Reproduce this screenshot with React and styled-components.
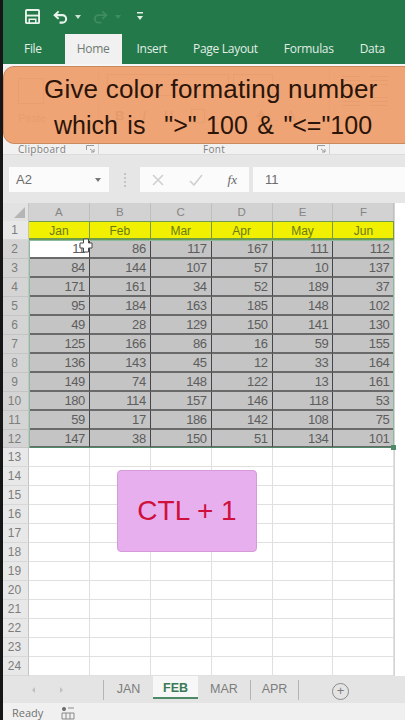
import React from 'react';
import styled, { createGlobalStyle } from 'styled-components';

const Global = createGlobalStyle`
	html, body { margin: 0; padding: 0; background: #161616; }
	body { font-family: "Liberation Sans", Arial, sans-serif; }
`;

const Page = styled.div`
	position: relative;
	width: 405px;
	height: 720px;
	overflow: hidden;
	display: flex;
	background: #161616;
`;

const Edge = styled.div`
	width: 3px;
	flex: none;
	background: #161616;
`;

const Main = styled.div`
	width: 402px;
	display: flex;
	flex-direction: column;
	background: #e6e6e6;
`;

const TitleBar = styled.div`
	height: 33px;
	background: #23794a;
	display: flex;
	align-items: center;
	box-sizing: border-box;
`;

const QuickSlot = styled.div`
	display: flex;
	margin-left: ${p => p.$left}px;
`;

const TabBar = styled.div`
	height: 31px;
	background: #23794a;
	display: flex;
	align-items: flex-end;
	padding-left: 21px;
`;

const RibbonTab = styled.div`
	height: 30px;
	line-height: 29px;
	font-size: 12px;
	margin-right: ${p => p.$gap}px;
	padding: ${p => (p.$active ? '0 12px' : '0')};
	color: ${p => (p.$active ? '#6f7a72' : '#e2eee6')};
	background: ${p => (p.$active ? '#f1f1f1' : 'transparent')};
	font-family: "Open Sans", sans-serif;
	letter-spacing: -0.3px;
`;

const Ribbon = styled.div`
	height: 91px;
	background: #f1f1f1;
	border-top: 2px solid #f6f6f6;
	box-sizing: border-box;
	display: flex;
	border-bottom: 1px solid #dcdcdc;
`;

const RibbonGroup = styled.div`
	width: ${p => p.$width}px;
	flex: none;
	box-sizing: border-box;
	border-right: 1px solid ${p => (p.$plain ? 'transparent' : '#cfcfcf')};
	display: flex;
	flex-direction: column;
	position: relative;
`;

const GroupBody = styled.div`
	height: 76px;
	flex: none;
	box-sizing: border-box;
	padding: ${p => p.$pad};
	display: flex;
	flex-direction: column;
	gap: 12px;
`;

const ToolRow = styled.div`
	display: flex;
	align-items: center;
	gap: ${p => p.$gap || 8}px;
	padding-left: ${p => p.$indent || 0}px;
`;

const ToolSpacer = styled.div`
	width: ${p => p.$width}px;
	flex: none;
`;

const FaintBox = styled.div`
	width: ${p => p.$width}px;
	height: ${p => p.$height || 22}px;
	border: 1px solid #b9b9b9;
	flex: none;
	box-sizing: border-box;
`;

const FaintLetter = styled.span`
	font-size: 13px;
	color: #8b8b8b;
	font-weight: ${p => (p.$bold ? 'bold' : 'normal')};
	font-style: ${p => (p.$italic ? 'italic' : 'normal')};
	text-decoration: ${p => (p.$under ? 'underline' : 'none')};
`;

const PasteLabel = styled.div`
	font-size: 11px;
	color: #a8a8a8;
	margin-top: -4px;
`;

const FaintLines = styled.div`
	width: 18px;
	display: flex;
	flex-direction: column;
	gap: 3px;
	span {
		height: 1px;
		background: #a8a8a8;
	}
`;

const LabelRow = styled.div`
	display: flex;
	align-items: center;
	justify-content: ${p => p.$align || 'center'};
	height: 13px;
	padding: ${p => p.$pad || '0'};
	position: relative;
`;

const GroupLabel = styled.div`
	font-size: 10px;
	color: #808080;
	letter-spacing: 0.3px;
	font-family: "Open Sans", sans-serif;
`;

const Launcher = styled.svg`
	position: absolute;
	right: 3px;
	top: 3px;
`;

const FormulaRow = styled.div`
	height: 48px;
	flex: none;
	box-sizing: border-box;
	padding: 12px 0 0 6px;
	display: flex;
	align-items: flex-start;
	background: #e6e6e6;
`;

const NameBox = styled.div`
	width: 100px;
	height: 25px;
	background: #fbfbfb;
	color: #6c6c6c;
	font-size: 13px;
	line-height: 25px;
	padding: 0 7px;
	box-sizing: border-box;
	display: flex;
	justify-content: space-between;
	align-items: center;
`;

const Caret = styled.span`
	width: 0;
	height: 0;
	border-left: 3px solid transparent;
	border-right: 3px solid transparent;
	border-top: 4px solid #777777;
	margin-right: 1px;
`;

const Dots = styled.div`
	width: 31px;
	height: 25px;
	display: flex;
	flex-direction: column;
	justify-content: center;
	align-items: center;
	gap: 2px;
	span {
		width: 2px;
		height: 2px;
		background: #c4c4c4;
	}
`;

const FxBox = styled.div`
	width: 109px;
	height: 25px;
	background: #fbfbfb;
	display: flex;
	align-items: center;
	justify-content: space-between;
	padding: 0 12px;
	box-sizing: border-box;
	margin-right: 4px;
`;

const Fx = styled.span`
	font-family: "Liberation Serif", serif;
	font-style: italic;
	font-size: 13px;
	color: #666666;
`;

const FormulaInput = styled.div`
	flex: 1;
	height: 25px;
	background: #fbfbfb;
	color: #6c6c6c;
	font-size: 13px;
	line-height: 25px;
	padding-left: 12px;
`;

const SheetWrap = styled.div`
	position: relative;
	height: 472px;
	flex: none;
	background: #ffffff;
`;

const Sheet = styled.div`
	display: grid;
	grid-template-columns: 26px repeat(6, 60.9px) 1fr;
	grid-template-rows: 18px 19px repeat(23, 18.96px);
	height: 472px;
`;

const ColHead = styled.div`
	background: #d2d2d2;
	color: #858585;
	font-size: 11.5px;
	text-align: center;
	line-height: 18px;
	border-right: 1px solid #bfbfbf;
	box-sizing: border-box;
`;

const Corner = styled.div`
	background: #e2e2e2;
	border-right: 1px solid #c4c4c4;
	box-sizing: border-box;
	display: flex;
	align-items: flex-end;
	justify-content: flex-end;
	padding: 0 3px 3px 0;
`;

const RowHead = styled.div`
	background: ${p => (p.$on ? '#d4d4d4' : '#e8e8e8')};
	color: #7d7d7d;
	font-size: 12px;
	text-align: center;
	display: flex;
	align-items: center;
	justify-content: center;
	padding-right: 2px;
	box-sizing: border-box;
	border-bottom: 1px solid ${p => (p.$on ? '#c4c4c4' : '#d8d8d8')};
	border-right: 1px solid #c4c4c4;
`;

const HeadCell = styled.div`
	background: #f0f000;
	color: #6c7a14;
	font-size: 12px;
	text-align: center;
	line-height: 18px;
	box-sizing: border-box;
	border-right: 1px solid #7c9a3c;
	border-bottom: 2px solid #6f9c4c;
	border-top: 1px solid #6f9c4c;
`;

const NumCell = styled.div`
	background: ${p => (p.$white ? '#ffffff' : '#c4c4c4')};
	color: #5d5d5d;
	font-size: 13px;
	letter-spacing: -0.4px;
	text-align: right;
	line-height: 18px;
	padding-right: 4px;
	box-sizing: border-box;
	border-right: 1px solid #45454d;
	border-bottom: 2px solid #6a6a6a;
	overflow: hidden;
`;

const BlankCell = styled.div`
	background: #ffffff;
	box-sizing: border-box;
	border-right: 1px solid #e0e0e0;
	border-bottom: 1px solid #e0e0e0;
`;

const SideCell = styled.div`
	background: #ffffff;
	box-sizing: border-box;
	border-left: 1px solid #d4d4d4;
`;

const Selection = styled.div`
	position: absolute;
	left: 26px;
	top: 37px;
	width: 365px;
	height: 208px;
	border: 1.5px solid #8dbba0;
	border-bottom-color: #4f8a68;
	box-sizing: border-box;
	pointer-events: none;
`;

const Handle = styled.div`
	position: absolute;
	right: -3px;
	bottom: -3px;
	width: 5px;
	height: 5px;
	background: #4f8a68;
`;

const Cursor = styled.svg`
	position: absolute;
	left: 76px;
	top: 35px;
`;

const SheetTabs = styled.div`
	height: 28px;
	flex: none;
	background: #e4e4e4;
	border-top: 1px solid #cfcfcf;
	box-sizing: border-box;
	display: flex;
	align-items: flex-start;
	padding-left: 29px;
`;

const Arrow = styled.div`
	width: 0;
	height: 0;
	margin-top: 11px;
	margin-right: ${p => p.$gap}px;
	border-top: 3px solid transparent;
	border-bottom: 3px solid transparent;
	${p => (p.$left ? 'border-right: 3px solid #c0c0c0;' : 'border-left: 3px solid #c0c0c0;')}
`;

const TabSep = styled.div`
	width: 1px;
	height: 20px;
	margin-top: 4px;
	background: #b4b4b4;
`;

const SheetTab = styled.div`
	width: ${p => p.$width}px;
	height: 24px;
	margin-top: ${p => (p.$active ? '-1px' : '0')};
	box-sizing: border-box;
	font-size: 12.5px;
	line-height: 26px;
	text-align: center;
	color: ${p => (p.$active ? '#397a55' : '#7d7d7d')};
	font-weight: ${p => (p.$active ? 'bold' : 'normal')};
	background: ${p => (p.$active ? '#f7f7f7' : 'transparent')};
	border-bottom: ${p => (p.$active ? '2px solid #4f8a68' : 'none')};
`;

const AddSheet = styled.div`
	width: 15px;
	height: 15px;
	margin: 7px 0 0 33px;
	border: 1px solid #8a8a8a;
	border-radius: 50%;
	color: #7a7a7a;
	font-size: 13px;
	line-height: 14px;
	text-align: center;
`;

const StatusBar = styled.div`
	flex: 1;
	background: #f0f0f0;
	display: flex;
	align-items: flex-end;
	padding: 0 0 0 9px;
	gap: 18px;
	color: #707070;
	font-size: 11px;
	font-family: "Open Sans", sans-serif;
`;

const Banner = styled.div`
	position: absolute;
	left: 3px;
	top: 66px;
	width: 420px;
	height: 78px;
	background: rgba(238, 155, 104, 0.9);
	border: 1px solid #c98a60;
	border-radius: 11px;
	box-sizing: border-box;
	color: #2b1408;
	line-height: 36px;
	padding-top: 4px;
`;

const BannerLine = styled.div`
	white-space: pre;
	font-size: ${p => p.$size}px;
	letter-spacing: ${p => p.$track || 0}px;
	word-spacing: ${p => p.$spread || 0}px;
	padding-left: ${p => p.$pad}px;
`;

const Note = styled.div`
	position: absolute;
	left: 117px;
	top: 470px;
	width: 140px;
	height: 82px;
	background: #e8afee;
	border: 1px solid #d79ad8;
	border-radius: 4px;
	box-sizing: border-box;
	color: #cf0f3c;
	font-size: 28px;
	display: flex;
	align-items: center;
	justify-content: center;
`;

const cols = ['A', 'B', 'C', 'D', 'E', 'F'];
const months = ['Jan', 'Feb', 'Mar', 'Apr', 'May', 'Jun'];
const rows = [
	['11', 86, 117, 167, 111, 112],
	[84, 144, 107, 57, 10, 137],
	[171, 161, 34, 52, 189, 37],
	[95, 184, 163, 185, 148, 102],
	[49, 28, 129, 150, 141, 130],
	[125, 166, 86, 16, 59, 155],
	[136, 143, 45, 12, 33, 164],
	[149, 74, 148, 122, 13, 161],
	[180, 114, 157, 146, 118, 53],
	[59, 17, 186, 142, 108, 75],
	[147, 38, 150, 51, 134, 101],
];
const blankRows = Array.from({ length: 12 }, (_, i) => i + 13);

const SaveIcon = () => (
	<svg width="15" height="15" viewBox="0 0 16 16" fill="none" stroke="#e9f3ec" strokeWidth="2">
		<rect x="1" y="1" width="14" height="14" rx="1" />
		<path d="M1 7h14" />
		<path d="M4.5 15v-4h7v4" strokeWidth="1.6" />
	</svg>
);

const UndoIcon = ({ color }) => (
	<svg width="15" height="14" viewBox="0 0 16 14" fill="none" stroke={color} strokeWidth="2.2">
		<path d="M6 1L1.8 5 6 9" />
		<path d="M2.5 5H10a3.6 3.6 0 0 1 0 8H7" />
	</svg>
);

const RedoIcon = ({ color }) => (
	<svg width="15" height="14" viewBox="0 0 16 14" fill="none" stroke={color} strokeWidth="2">
		<path d="M10 1l4.2 4L10 9" />
		<path d="M13.5 5H6a3.6 3.6 0 0 0 0 8h3" />
	</svg>
);

const TinyCaret = ({ color }) => (
	<svg width="6" height="4" viewBox="0 0 6 4">
		<path d="M0 0h6L3 4z" fill={color} />
	</svg>
);

const MoreIcon = () => (
	<svg width="6" height="9" viewBox="0 0 6 9" fill="#e2eee6">
		<rect x="0" y="0" width="6" height="1.5" />
		<path d="M0 4h6L3 8z" />
	</svg>
);

const LauncherIcon = () => (
	<Launcher width="9" height="8" viewBox="0 0 9 8" fill="none" stroke="#9a9a9a">
		<path d="M0.5 5V0.5H8M4 4l4 3M8 4v3H5" />
	</Launcher>
);

export default function App() {
	return (
		<Page>
			<Global />
			<Edge />
			<Main>
				<TitleBar>
					<QuickSlot $left={22}><SaveIcon /></QuickSlot>
					<QuickSlot $left={13}><UndoIcon color="#e9f3ec" /></QuickSlot>
					<QuickSlot $left={7}><TinyCaret color="#cfe2d6" /></QuickSlot>
					<QuickSlot $left={12}><RedoIcon color="#3f8c62" /></QuickSlot>
					<QuickSlot $left={7}><TinyCaret color="#3f8c62" /></QuickSlot>
					<QuickSlot $left={16}><MoreIcon /></QuickSlot>
				</TitleBar>
				<TabBar>
					<RibbonTab $gap={23}>File</RibbonTab>
					<RibbonTab $gap={15} $active>Home</RibbonTab>
					<RibbonTab $gap={26}>Insert</RibbonTab>
					<RibbonTab $gap={26}>Page Layout</RibbonTab>
					<RibbonTab $gap={26}>Formulas</RibbonTab>
					<RibbonTab $gap={0}>Data</RibbonTab>
				</TabBar>
				<Ribbon>
					<RibbonGroup $width={96}>
						<GroupBody $pad="12px 0 0 15px">
							<FaintBox $width={26} $height={26} />
							<PasteLabel>Paste</PasteLabel>
						</GroupBody>
						<LabelRow $align="flex-start" $pad="0 0 0 15px">
							<GroupLabel>Clipboard</GroupLabel>
							<LauncherIcon />
						</LabelRow>
					</RibbonGroup>
					<RibbonGroup $width={231}>
						<GroupBody $pad="8px 0 0 8px">
							<ToolRow $gap={4}>
								<FaintBox $width={122} />
								<FaintBox $width={40} />
							</ToolRow>
							<ToolRow $gap={18} $indent={8}>
								<FaintLetter $bold>B</FaintLetter>
								<FaintLetter $italic>I</FaintLetter>
								<FaintLetter $under>U</FaintLetter>
								<FaintBox $width={14} $height={14} />
								<ToolSpacer $width={13} />
								<svg width="14" height="14" viewBox="0 0 14 14">
									<path d="M7 1l5 7H2z" fill="#a8a8a8" />
									<circle cx="7" cy="11" r="2.5" fill="#e8b830" />
								</svg>
								<FaintLetter>A</FaintLetter>
							</ToolRow>
						</GroupBody>
						<LabelRow>
							<GroupLabel>Font</GroupLabel>
							<LauncherIcon />
						</LabelRow>
					</RibbonGroup>
					<RibbonGroup $width={75} $plain>
						<GroupBody $pad="10px 0 0 12px">
							<ToolRow $gap={10}>
								<FaintLines><span /><span /><span /></FaintLines>
								<FaintLines><span /><span /><span /></FaintLines>
							</ToolRow>
							<ToolRow $gap={10}>
								<FaintLines><span /><span /><span /></FaintLines>
								<FaintLines><span /><span /><span /></FaintLines>
							</ToolRow>
						</GroupBody>
					</RibbonGroup>
				</Ribbon>
				<FormulaRow>
					<NameBox>A2<Caret /></NameBox>
					<Dots><span /><span /><span /><span /></Dots>
					<FxBox>
						<svg width="12" height="12" viewBox="0 0 12 12" stroke="#cfcfcf" strokeWidth="1.6" fill="none">
							<path d="M1 1l10 10M11 1L1 11" />
						</svg>
						<svg width="14" height="12" viewBox="0 0 14 12" stroke="#cfcfcf" strokeWidth="1.6" fill="none">
							<path d="M1 7l4 4 8-10" />
						</svg>
						<Fx>fx</Fx>
					</FxBox>
					<FormulaInput>11</FormulaInput>
				</FormulaRow>
				<SheetWrap>
					<Sheet>
						<Corner>
							<svg width="11" height="11" viewBox="0 0 11 11"><path d="M11 0v11H0z" fill="#b5b5b5" /></svg>
						</Corner>
						{cols.map(c => <ColHead key={c}>{c}</ColHead>)}
						<SideCell />
						<RowHead $on={false}>1</RowHead>
						{months.map(m => <HeadCell key={m}>{m}</HeadCell>)}
						<SideCell />
						{rows.map((row, i) => (
							<React.Fragment key={i}>
								<RowHead $on>{i + 2}</RowHead>
								{row.map((v, j) => (
									<NumCell key={j} $white={i === 0 && j === 0}>{v}</NumCell>
								))}
								<SideCell />
							</React.Fragment>
						))}
						{blankRows.map(n => (
							<React.Fragment key={n}>
								<RowHead>{n}</RowHead>
								{cols.map(c => <BlankCell key={c} />)}
								<SideCell />
							</React.Fragment>
						))}
					</Sheet>
					<Selection><Handle /></Selection>
					<Cursor width="14" height="15" viewBox="0 0 14 15">
						<path d="M4.5 1h5v4h3.5v5H9.5v4h-5v-4H1V5h3.5z" fill="#ffffff" stroke="#4a4a4a" strokeWidth="1" />
					</Cursor>
				</SheetWrap>
				<SheetTabs>
					<Arrow $left $gap={25} />
					<Arrow $gap={40} />
					<TabSep />
					<SheetTab $width={49}>JAN</SheetTab>
					<SheetTab $width={45} $active>FEB</SheetTab>
					<SheetTab $width={52}>MAR</SheetTab>
					<TabSep />
					<SheetTab $width={47}>APR</SheetTab>
					<TabSep />
					<AddSheet>+</AddSheet>
				</SheetTabs>
				<StatusBar>
					<span>Ready</span>
					<svg width="14" height="14" viewBox="0 0 14 14" fill="none" stroke="#8a8a8a">
						<circle cx="3" cy="3" r="2" fill="#6a6a6a" stroke="none" />
						<path d="M7 2h6M1 7h12v6H1zM5 7v6M9 7v6" />
					</svg>
				</StatusBar>
			</Main>
			<Banner>
				<BannerLine $size={26} $track={0.2} $pad={40}>Give color formating number</BannerLine>
				<BannerLine $size={25} $spread={2.5} $pad={50}>{'which is  ">" 100 & "<="100'}</BannerLine>
			</Banner>
			<Note>CTL + 1</Note>
		</Page>
	);
}
